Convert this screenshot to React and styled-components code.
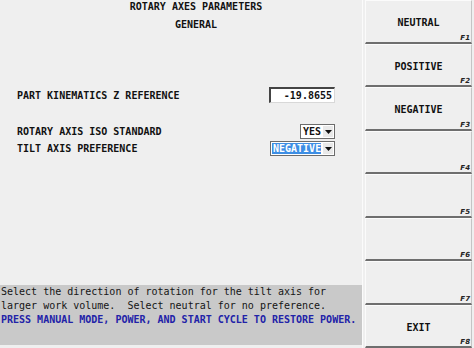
import styled, { createGlobalStyle } from "styled-components"

const GlobalStyle = createGlobalStyle`
  body {
    margin: 0;
    background: #efefef;
    font-family: "DejaVu Sans Mono", "Liberation Mono", monospace;
  }
`

const softKeys = [
  { key: "F1", label: "NEUTRAL" },
  { key: "F2", label: "POSITIVE" },
  { key: "F3", label: "NEGATIVE" },
  { key: "F4", label: "" },
  { key: "F5", label: "" },
  { key: "F6", label: "" },
  { key: "F7", label: "" },
  { key: "F8", label: "EXIT" },
]

function Arrow() {
  return (
    <ArrowBox>
      <svg width="7" height="4" viewBox="0 0 7 4">
        <path d="M0 0 L7 0 L3.5 4 Z" fill="#111" />
      </svg>
    </ArrowBox>
  )
}

function Dropdown({ value, width, selected }) {
  return (
    <Select width={width}>
      <SelectValue selected={selected}>{value}</SelectValue>
      <Arrow />
    </Select>
  )
}

export default function App() {
  return (
    <>
      <GlobalStyle />
      <Screen>
        <Main>
          <Header>
            <Title>ROTARY AXES PARAMETERS</Title>
            <SubTitle>GENERAL</SubTitle>
          </Header>
          <Fields>
            <Row>
              <Label>PART KINEMATICS Z REFERENCE</Label>
              <NumberInput>-19.8655</NumberInput>
            </Row>
            <Row gap={21}>
              <Label>ROTARY AXIS ISO STANDARD</Label>
              <Dropdown value="YES" width={35} />
            </Row>
            <Row gap={2}>
              <Label>TILT AXIS PREFERENCE</Label>
              <Dropdown value="NEGATIVE" width={65} selected />
            </Row>
          </Fields>
          <Message>
            <MessageLine>Select the direction of rotation for the tilt axis for</MessageLine>
            <MessageLine>larger work volume.  Select neutral for no preference.</MessageLine>
            <AlertLine>PRESS MANUAL MODE, POWER, AND START CYCLE TO RESTORE POWER.</AlertLine>
          </Message>
        </Main>
        <SidePanel>
          {softKeys.map((k) => (
            <SoftKey key={k.key}>
              <KeyLabel>{k.label}</KeyLabel>
              <KeyName>{k.key}</KeyName>
            </SoftKey>
          ))}
        </SidePanel>
      </Screen>
    </>
  )
}

const Screen = styled.div`
  display: flex;
  width: 474px;
  height: 348px;
  background: #efefef;
  color: #111;
  font-size: 10px;
  overflow: hidden;
`

const Main = styled.div`
  width: 362px;
  display: flex;
  flex-direction: column;
  border-right: 1px solid #fbfbfb;
`

const Header = styled.div`
  padding: 1px 0 0 30px;
  text-align: center;
  font-weight: bold;
  line-height: 12px;
`

const Title = styled.div``

const SubTitle = styled.div`
  margin-top: 6px;
`

const Fields = styled.div`
  margin-top: 56px;
  padding: 0 27px 0 17px;
  display: flex;
  flex-direction: column;
  flex: 1;
`

const Row = styled.div`
  display: flex;
  align-items: center;
  justify-content: space-between;
  margin-top: ${(props) => props.gap || 0}px;
`

const Label = styled.span`
  font-weight: bold;
  white-space: pre;
`

const NumberInput = styled.div`
  width: 61px;
  height: 13px;
  line-height: 13px;
  background: #fff;
  border-top: 2px solid #444;
  border-left: 2px solid #444;
  border-bottom: 1px solid #d8d8d8;
  border-right: 1px solid #d8d8d8;
  text-align: right;
  padding-right: 2px;
  box-sizing: content-box;
  font-weight: bold;
`

const Select = styled.div`
  width: ${(props) => props.width}px;
  height: 15px;
  box-sizing: border-box;
  border: 1px solid #6c6c6c;
  background: #fff;
  display: flex;
  align-items: stretch;
  padding: 1px;
`

const SelectValue = styled.span`
  flex: 1;
  font-weight: bold;
  line-height: 11px;
  padding-left: 1px;
  margin-right: 1px;
  background: ${(props) => (props.selected ? "#3d8ee4" : "transparent")};
  color: ${(props) => (props.selected ? "#fff" : "#111")};
`

const ArrowBox = styled.span`
  width: 10px;
  background: #e9e9e9;
  border-left: 1px solid #fff;
  display: flex;
  align-items: center;
  justify-content: center;
`

const Message = styled.div`
  height: 60px;
  margin-bottom: 3px;
  background: #c9c9c9;
  line-height: 14px;
  padding-left: 1px;
  white-space: pre;
`

const MessageLine = styled.div`
  color: #151515;
`

const AlertLine = styled.div`
  color: #2222a8;
  font-weight: bold;
`

const SidePanel = styled.div`
  flex: 1;
  display: grid;
  grid-template-rows: repeat(8, 1fr);
  padding: 0 2px 0 2px;
`

const SoftKey = styled.div`
  position: relative;
  display: flex;
  align-items: center;
  justify-content: center;
  padding-top: 3px;
  border-top: 1px solid #fbfbfb;
  border-left: 1px solid #fbfbfb;
  border-right: 1px solid #c4c4c4;
  border-bottom: 2px solid #6e6e6e;
  background: #efefef;
`

const KeyLabel = styled.span`
  font-weight: bold;
`

const KeyName = styled.span`
  position: absolute;
  right: 1px;
  bottom: 0;
  font-family: "DejaVu Sans", sans-serif;
  font-size: 7px;
  font-style: italic;
  font-weight: bold;
  color: #222;
`
